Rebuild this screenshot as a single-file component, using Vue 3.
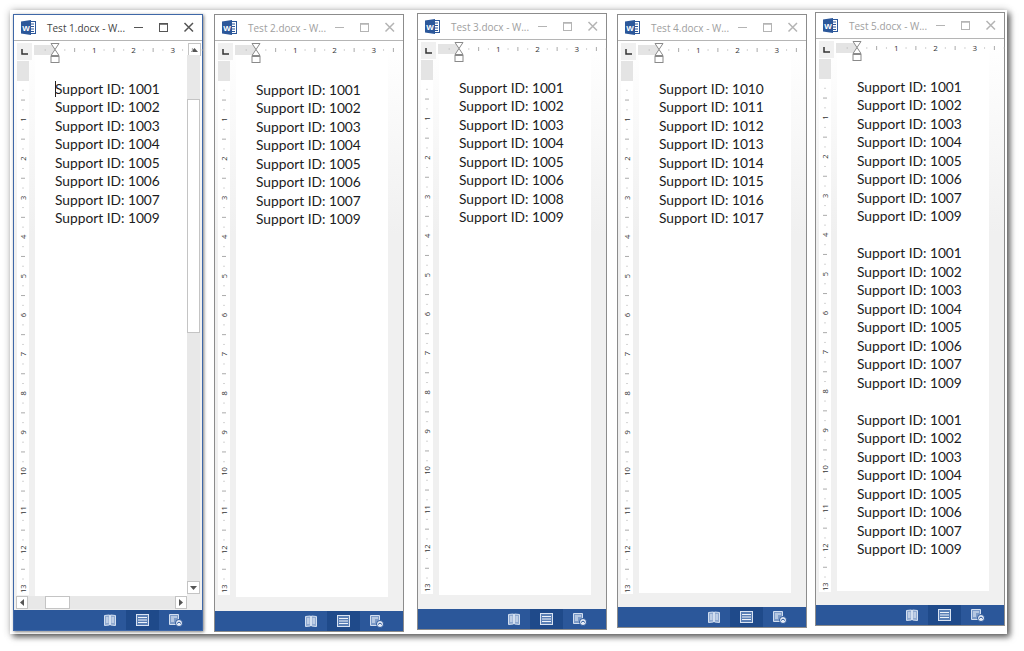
<script setup>
const std = ['1001', '1002', '1003', '1004', '1005', '1006', '1007', '1009']

const windows = [
  { name: 'Test 1.docx - W...', left: 3, top: 4, height: 617, textTop: 24.5, active: true, groups: [std] },
  { name: 'Test 2.docx - W...', left: 204, top: 4, height: 618, textTop: 25.5, groups: [std] },
  { name: 'Test 3.docx - W...', left: 407, top: 3, height: 617, textTop: 24.5, groups: [['1001', '1002', '1003', '1004', '1005', '1006', '1008', '1009']] },
  { name: 'Test 4.docx - W...', left: 607, top: 4, height: 614, textTop: 24.5, groups: [['1010', '1011', '1012', '1013', '1014', '1015', '1016', '1017']] },
  { name: 'Test 5.docx - W...', left: 805, top: 2, height: 614, textTop: 24.5, groups: [std, std, std] },
]

const inch = 39.25
const hTicks = []
for (let i = -1; i < 16; i++) {
  if (i % 4 !== 0 || i < 0) hTicks.push({ x: 21 + (i * inch) / 4, dash: Math.abs(i % 4) === 2 })
}
const hNums = [1, 2, 3]

const vInch = 39.1
const vNums = Array.from({ length: 13 }, (_, i) => i + 1)
const vTicks = []
for (let i = 0; i < 54; i++) {
  if (i % 4 !== 0) vTicks.push({ y: 19.5 + (i * vInch) / 4, dash: i % 4 === 2 })
}
</script>

<template>
  <div class="screen">
    <div class="sheet">
      <section
        v-for="win in windows"
        :key="win.name"
        class="window"
        :class="{ active: win.active }"
        :style="{ left: win.left + 'px', top: win.top + 'px', height: win.height + 'px' }"
      >
        <header class="titlebar">
          <svg class="word-logo" width="15" height="15" viewBox="0 0 15 15">
            <rect x="5" y="1.5" width="9.5" height="12" fill="#fff" stroke="#2b579a" />
            <path d="M10 4h3M10 6.5h3M10 9h3M10 11.5h3" stroke="#2b579a" />
            <path d="M0 1.5 10 0v15L0 13.5z" fill="#2b579a" />
            <text x="5" y="10.5" text-anchor="middle" class="word-w">W</text>
          </svg>
          <span class="title">{{ win.name }}</span>
          <svg class="controls" width="60" height="11" viewBox="0 0 60 11">
            <path d="M0 5.5h9" />
            <rect x="25.5" y="1.5" width="8" height="8" />
            <path class="top-edge" d="M25 2h9" />
            <path d="M50.5 1 59 9.5M59 1 50.5 9.5" class="close" />
          </svg>
        </header>

        <div class="ruler-row">
          <div class="tab-box">
            <svg width="7" height="6" viewBox="0 0 7 6"><path d="M1 0v5h6" fill="none" stroke="#333" stroke-width="1.5" /></svg>
          </div>
          <svg class="h-ruler" width="153" height="10" viewBox="0 0 153 10">
            <rect width="21" height="10" fill="#e4e4e4" />
            <rect x="21" width="132" height="10" fill="#fff" />
            <template v-for="t in hTicks" :key="t.x">
              <path v-if="t.dash" :d="`M${t.x} 3v4`" class="tick" />
              <rect v-else :x="t.x - 0.5" y="4.5" width="1" height="1" fill="#aaa" />
            </template>
            <text v-for="n in hNums" :key="n" :x="21 + n * inch" y="8" text-anchor="middle" class="ruler-num">{{ n }}</text>
            <path d="M17 -1.5h8l-4 6zM21 4.5l4 6h-8z" class="indent" />
            <rect x="17" y="11.5" width="8" height="6" class="indent" />
          </svg>
          <div v-if="win.active" class="scroll-btn up">
            <svg width="7" height="4" viewBox="0 0 7 4"><path d="M3.5 0 7 4H0z" fill="#555" /></svg>
          </div>
        </div>

        <div class="body">
          <div class="v-ruler">
            <svg width="12" height="534" viewBox="0 0 12 534">
              <rect width="12" height="534" fill="#fff" />
              <rect width="12" height="20" fill="#e4e4e4" />
              <template v-for="t in vTicks" :key="t.y">
                <path v-if="t.dash" :d="`M4 ${t.y}h4`" class="tick" />
                <rect v-else x="5.5" :y="t.y - 0.5" width="1" height="1" fill="#aaa" />
              </template>
              <text
                v-for="n in vNums"
                :key="n"
                x="0"
                y="0"
                text-anchor="middle"
                class="ruler-num"
                :transform="`translate(9 ${19.5 + n * vInch}) rotate(-90)`"
              >{{ n }}</text>
            </svg>
          </div>
          <div class="page" :style="{ paddingTop: win.textTop + 'px' }">
            <div v-for="(group, g) in win.groups" :key="g" class="group">
              <div v-for="(id, i) in group" :key="i" class="line">
                <i v-if="win.active && g === 0 && i === 0" class="caret"></i>Support ID: {{ id }}
              </div>
            </div>
          </div>
          <div v-if="win.active" class="v-scroll">
            <div class="v-spacer"></div>
            <div class="v-thumb"></div>
            <div class="v-spacer-fill"></div>
            <div class="scroll-btn">
              <svg width="7" height="4" viewBox="0 0 7 4"><path d="M0 0h7L3.5 4z" fill="#555" /></svg>
            </div>
          </div>
        </div>

        <div class="h-band">
          <div v-if="win.active" class="h-scroll">
            <div class="h-btn">
              <svg width="4" height="7" viewBox="0 0 4 7"><path d="M4 0v7L0 3.5z" fill="#555" /></svg>
            </div>
            <div class="h-thumb"></div>
            <div class="h-fill"></div>
            <div class="h-btn">
              <svg width="4" height="7" viewBox="0 0 4 7"><path d="M0 0v7l4-3.5z" fill="#555" /></svg>
            </div>
          </div>
        </div>

        <footer class="status">
          <div class="view">
            <svg width="12" height="12" viewBox="0 0 12 12">
              <path d="M.5 1.5 5.5 1v10l-5 .5zM11.5 1.5 6.5 1v10l5 .5z" fill="#8fa9d0" stroke="#d3dff0" />
              <path d="M2 4h2.5M2 6h2.5M2 8h2.5M7.5 4H10M7.5 6H10M7.5 8H10" stroke="#eef3fa" />
            </svg>
          </div>
          <div class="view on">
            <svg width="13" height="12" viewBox="0 0 13 12">
              <rect x=".5" y=".5" width="12" height="11" fill="#5a7fb5" stroke="#d9e3f2" />
              <path d="M2 3.5h9M2 6h9M2 8.5h9" stroke="#eef3fa" />
            </svg>
          </div>
          <div class="view">
            <svg width="14" height="13" viewBox="0 0 14 13">
              <path d="M.5.5h9v10h-9z" fill="#7d9bc8" stroke="#d3dff0" />
              <path d="M2 3h6M2 5h3M2 7h3" stroke="#eef3fa" />
              <circle cx="10" cy="9" r="3.5" fill="#e8eef8" stroke="#2b579a" />
              <path d="M8 9.5 10 8l2 1.5" fill="none" stroke="#2b579a" />
            </svg>
          </div>
        </footer>
      </section>
    </div>
  </div>
</template>

<style>
html, body {
  margin: 0;
  background: #fff;
}
</style>

<style scoped>
.screen {
  width: 1024px;
  height: 651px;
  padding: 10px 0 0 10px;
  box-sizing: border-box;
  overflow: hidden;
  background: #fff;
}

.sheet {
  position: relative;
  width: 997px;
  height: 624px;
  background: #fff;
  box-shadow: 3px 3px 6px rgba(0, 0, 0, 0.6), 0 0 8px rgba(0, 0, 0, 0.2);
}

.window {
  position: absolute;
  width: 190px;
  box-sizing: border-box;
  display: flex;
  flex-direction: column;
  border: 1px solid #8c8c8c;
  background: linear-gradient(#fff, #fff 30px, #f0f0f0 220px);
  font-family: "Open Sans", sans-serif;
}

.window.active {
  border-color: #3f68a8;
  box-shadow: 1px 1px 3px rgba(0, 0, 0, 0.5);
}

.titlebar {
  height: 25px;
  flex: none;
  display: flex;
  align-items: center;
  padding: 0 8px 0 7px;
  background: #fff;
  border-bottom: 1px solid #b5b5b5;
}

.word-w {
  font: bold 8px "Liberation Sans", sans-serif;
  fill: #fff;
}

.title {
  margin-left: 11px;
  font-size: 10px;
  color: #a0a0a0;
  white-space: nowrap;
  flex: 1;
}

.active .title {
  color: #444;
}

.controls {
  flex: none;
  fill: none;
  stroke: #b4b4b4;
  stroke-width: 1;
}

.controls .close {
  stroke-width: 1.5;
}

.controls .top-edge {
  stroke-width: 1.5;
}

.active .controls {
  stroke: #555;
}

.ruler-row {
  height: 14px;
  flex: none;
  display: flex;
  align-items: flex-start;
  padding: 2px 0 0 3px;
  box-sizing: border-box;
}

.tab-box {
  width: 15px;
  height: 17px;
  margin-right: 2px;
  background: #f0f0f0;
  display: flex;
  align-items: center;
  justify-content: center;
  flex: none;
  position: relative;
  z-index: 1;
}

.h-ruler {
  flex: none;
  overflow: visible;
  position: relative;
  z-index: 2;
  margin-top: 2px;
}

.tick {
  stroke: #aaa;
  fill: none;
}

.ruler-num {
  font: 8px "Open Sans", sans-serif;
  fill: #333;
}

.indent {
  fill: #fff;
  stroke: #8a8a8a;
}

.body {
  flex: 1;
  min-height: 0;
  display: flex;
  padding-left: 3px;
}

.v-ruler {
  width: 12px;
  flex: none;
  margin: 6px 6px -1px 0;
  overflow: hidden;
}

.v-ruler .ruler-num {
  font-size: 7.5px;
}

.v-ruler svg {
  display: block;
}

.page {
  width: 152px;
  flex: none;
  background: #fff;
  padding-left: 20px;
  box-sizing: border-box;
  overflow: hidden;
  font-family: Lato, sans-serif;
  font-size: 13.75px;
  color: #1c1c1c;
}

.group {
  margin-bottom: 18.5px;
}

.line {
  position: relative;
  height: 18.5px;
  line-height: 18.5px;
  white-space: nowrap;
}

.caret {
  position: absolute;
  left: 0;
  top: 1px;
  width: 1px;
  height: 16px;
  background: #222;
}

.v-scroll {
  width: 13px;
  flex: none;
  display: flex;
  flex-direction: column;
  background: #e8e8e8;
  margin-bottom: 2px;
}

.v-spacer {
  height: 44px;
}

.v-thumb {
  height: 234px;
  background: #fff;
  border: 1px solid #c4c4c4;
  box-sizing: border-box;
}

.v-spacer-fill {
  flex: 1;
}

.scroll-btn {
  width: 13px;
  height: 13px;
  flex: none;
  background: #fff;
  border: 1px solid #c4c4c4;
  box-sizing: border-box;
  display: flex;
  align-items: center;
  justify-content: center;
}

.scroll-btn.up {
  margin-left: 1px;
}

.h-band {
  height: 14px;
  flex: none;
}

.h-scroll {
  display: flex;
  height: 13px;
  margin-left: 2px;
  width: 171px;
  background: #e8e8e8;
}

.h-btn {
  width: 12px;
  height: 13px;
  flex: none;
  background: #fff;
  border: 1px solid #c4c4c4;
  box-sizing: border-box;
  display: flex;
  align-items: center;
  justify-content: center;
}

.h-thumb {
  width: 25px;
  margin-left: 17px;
  background: #fff;
  border: 1px solid #c4c4c4;
  box-sizing: border-box;
}

.h-fill {
  flex: 1;
}

.status {
  height: 20px;
  flex: none;
  display: flex;
  justify-content: flex-end;
  padding-right: 10px;
  background: #2b579a;
}

.view {
  width: 33px;
  display: flex;
  align-items: center;
  justify-content: center;
}

.view.on {
  background: #1f4a8a;
}
</style>
